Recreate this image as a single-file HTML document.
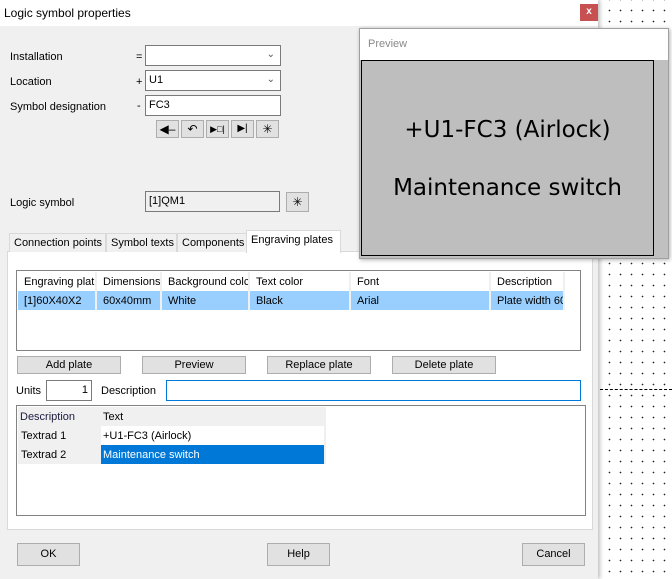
<!DOCTYPE html>
<html><head><style>
*{box-sizing:border-box;margin:0;padding:0}
body{width:672px;height:579px;position:relative;overflow:hidden;font-family:"Liberation Sans",sans-serif;font-size:11px;color:#000;background:#fff}
.a{position:absolute}
.dots{left:600px;top:0;width:72px;height:579px;background-color:#fff;background-image:radial-gradient(circle,#222 0.7px,transparent 0.9px);background-size:11px 11px;background-position:4px 5px}
.dlg{left:0;top:0;width:598px;height:579px;background:#f0f0f0;box-shadow:2px 0 4px rgba(0,0,0,.25)}
.title{left:0;top:0;width:598px;height:26px;background:#fff;font-size:12px;padding:6px 0 0 4px}
.close{left:580px;top:4px;width:18px;height:17px;background:#c75050;color:#fff;font-size:10px;font-weight:bold;text-align:center;line-height:16px}
.inp{background:#fff;border:1px solid #7a7a7a;padding:0 3px;height:20px;line-height:18px}
.btn{background:#e1e1e1;border:1px solid #adadad;text-align:center;line-height:16px}
.sb{width:23px;height:18px;font-size:12px;line-height:16px}
.lbl{font-size:11px}
.tab{top:233px;height:19px;border:1px solid #d9d9d9;border-bottom:none;background:#f0f0f0;padding:3px 4px 0;font-size:11px;white-space:nowrap}
td{border-right:2px solid #f0f0f0;padding:0 6px;height:19px;white-space:nowrap;overflow:hidden;font-size:11px}
table{border-collapse:collapse;table-layout:fixed}
</style></head><body>
<div class="a dots"></div>
<div class="a" style="left:600px;top:389px;width:72px;border-top:1px dashed #000"></div>
<div class="a dlg"></div>
<div class="a title">Logic symbol properties</div>
<div class="a close">x</div>

<div class="a lbl" style="left:10px;top:51px">Installation</div>
<div class="a lbl" style="left:10px;top:76px">Location</div>
<div class="a lbl" style="left:10px;top:101px">Symbol designation</div>
<div class="a lbl" style="left:136px;top:51px">=</div>
<div class="a lbl" style="left:136px;top:76px">+</div>
<div class="a lbl" style="left:137px;top:100px">-</div>
<div class="a inp" style="left:145px;top:45px;width:136px;height:21px"><span style="position:absolute;right:5px;top:0;color:#555;font-size:10px">&#8964;</span></div>
<div class="a inp" style="left:145px;top:70px;width:136px;height:21px">U1<span style="position:absolute;right:5px;top:0;color:#555;font-size:10px">&#8964;</span></div>
<div class="a inp" style="left:145px;top:95px;width:136px;height:21px">FC3</div>
<div class="a btn sb" style="left:156px;top:120px">&#9664;&#8211;</div>
<div class="a btn sb" style="left:181px;top:120px">&#8630;</div>
<div class="a btn sb" style="left:206px;top:120px;font-size:9px">&#9654;&#9633;|</div>
<div class="a btn sb" style="left:231px;top:120px;font-size:10px">&#9654;|</div>
<div class="a btn sb" style="left:256px;top:120px">&#10035;</div>

<div class="a lbl" style="left:10px;top:197px">Logic symbol</div>
<div class="a inp" style="left:145px;top:191px;width:135px;height:21px;background:#f0f0f0">[1]QM1</div>
<div class="a btn sb" style="left:286px;top:192px;height:20px;line-height:18px">&#10035;</div>

<div class="a" style="left:7px;top:251px;width:586px;height:279px;background:#fff;border:1px solid #d9d9d9"></div>
<div class="a tab" style="left:9px;width:97px">Connection points</div>
<div class="a tab" style="left:106px;width:71px">Symbol texts</div>
<div class="a tab" style="left:177px;width:70px">Components</div>
<div class="a tab" style="left:246px;top:230px;height:23px;width:95px;background:#fff">Engraving plates</div>

<div class="a" style="left:16px;top:270px;width:565px;height:81px;border:1px solid #828282;background:#fff;padding:1px">
<table style="width:546px"><colgroup><col style="width:78px"><col style="width:65px"><col style="width:88px"><col style="width:101px"><col style="width:140px"><col style="width:74px"></colgroup>
<tr><td>Engraving plat</td><td>Dimensions</td><td>Background colc</td><td>Text color</td><td>Font</td><td>Description</td></tr>
<tr style="background:#99cfff"><td>[1]60X40X2</td><td>60x40mm</td><td>White</td><td>Black</td><td>Arial</td><td>Plate width 60</td></tr>
</table></div>

<div class="a btn" style="left:17px;top:356px;width:104px;height:18px">Add plate</div>
<div class="a btn" style="left:142px;top:356px;width:104px;height:18px">Preview</div>
<div class="a btn" style="left:267px;top:356px;width:104px;height:18px">Replace plate</div>
<div class="a btn" style="left:392px;top:356px;width:104px;height:18px">Delete plate</div>

<div class="a lbl" style="left:16px;top:385px">Units</div>
<div class="a inp" style="left:46px;top:380px;width:46px;height:21px;text-align:right">1</div>
<div class="a lbl" style="left:101px;top:385px">Description</div>
<div class="a" style="left:166px;top:380px;width:415px;height:21px;border:1px solid #0078d7;background:#fff"></div>

<div class="a" style="left:16px;top:405px;width:570px;height:111px;border:1px solid #828282;background:#fff;padding:1px">
<table style="width:307px"><colgroup><col style="width:82px"><col style="width:225px"></colgroup>
<tr style="background:#f0f0f0"><td style="color:#1a1a40;padding-left:2px">Description</td><td style="padding-left:2px">Text</td></tr>
<tr><td style="background:#f0f0f0;padding-left:3px">Textrad 1</td><td style="padding-left:2px">+U1-FC3 (Airlock)</td></tr>
<tr><td style="background:#f0f0f0;padding-left:3px">Textrad 2</td><td style="background:#0078d7;color:#fff;padding-left:2px">Maintenance switch</td></tr>
</table></div>

<div class="a btn" style="left:17px;top:543px;width:63px;height:23px;line-height:21px">OK</div>
<div class="a btn" style="left:267px;top:543px;width:63px;height:23px;line-height:21px">Help</div>
<div class="a btn" style="left:522px;top:543px;width:63px;height:23px;line-height:21px">Cancel</div>

<div class="a" style="left:359px;top:28px;width:310px;height:231px;background:#c0c0c0;border:1px solid #a0a0a0;box-shadow:1px 1px 4px rgba(0,0,0,.3)">
<div class="a" style="left:0;top:0;width:308px;height:31px;background:#fff;color:#8a8a8a;font-size:11px;padding:9px 0 0 8px">Preview</div>
<div class="a" style="left:1px;top:31px;width:293px;height:196px;border:1px solid #000;background:#bebebe;text-align:center;font-family:'DejaVu Sans',sans-serif;font-size:23px">
<div style="position:absolute;left:0;right:0;top:56px">+U1-FC3 (Airlock)</div>
<div style="position:absolute;left:0;right:0;top:114px">Maintenance switch</div>
</div></div>
</body></html>
